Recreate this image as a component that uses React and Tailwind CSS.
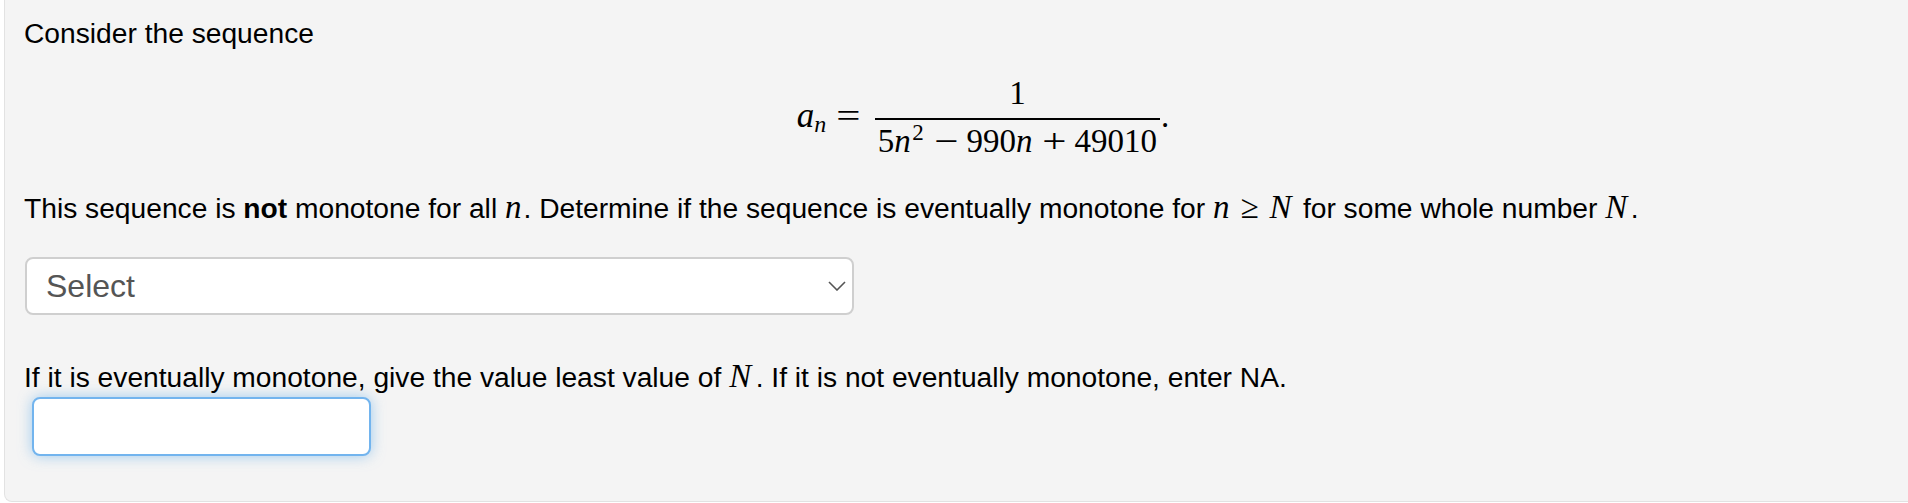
import React from "react";

const serif = "font-['Liberation_Serif','Times_New_Roman',serif]";

// inline math letter, padded to roughly match Computer Modern widths
function Mi({ children, pad = "mr-[3px]" }) {
  return (
    <span className={`${serif} italic text-[33px] leading-none ${pad}`}>
      {children}
    </span>
  );
}

function Op({ children }) {
  return (
    <span className="mx-[11px] inline-block scale-x-[1.3]">{children}</span>
  );
}

function Formula() {
  return (
    <div className={`${serif} mt-[24px] flex justify-center pl-[53px] text-[33px] leading-[33px]`}>
      <div className="mt-[22px] flex items-baseline">
        <span className="italic text-[35px]">a</span>
        <span className="italic text-[24px] relative top-[5px]">n</span>
        <span className="ml-[13px] inline-block scale-x-[1.3]">=</span>
      </div>
      <div className="ml-[17px] flex flex-col">
        <div className="text-center">1</div>
        <div className="mt-[8px] h-[1.5px] bg-black" />
        <div className="mt-[5px] px-[3px] flex items-baseline whitespace-nowrap">
          <span>5</span>
          <span className="italic mr-[1.5px]">n</span>
          <span className="text-[23px] leading-none relative top-[-12px] mr-[2px]">2</span>
          <Op>−</Op>
          <span>990</span>
          <span className="italic mr-[1.5px]">n</span>
          <Op>+</Op>
          <span>49010</span>
        </div>
      </div>
      <div className="mt-[23px] ml-[1px]">.</div>
    </div>
  );
}

export default function App() {
  return (
    <div className="min-h-screen bg-white text-black font-['Liberation_Sans',Arial,sans-serif]">
      <div className="ml-[4px] h-[502px] border-l border-b border-[#e2e2e2] rounded-bl-[8px] bg-[#f4f4f4] pl-[19px] pr-[19px] pt-[13px]">
        <p className="text-[28.2px] leading-[40px]">Consider the sequence</p>

        <Formula />

        <p className="mt-[29.5px] text-[28.2px] leading-[40px] whitespace-nowrap">
          This sequence is <b>not</b> monotone for all <Mi pad="mr-[2px]">n</Mi>.
          Determine if the sequence is eventually monotone for{" "}
          <Mi pad="">n</Mi>
          <span className={`${serif} text-[33px] mx-[11px]`}>≥</span>
          <Mi pad="mr-[3.5px]">N</Mi> for some whole number{" "}
          <Mi pad="mr-[3.5px]">N</Mi>.
        </p>

        <div className="mt-[29px] ml-[1px] w-[829px] h-[58px] flex items-center justify-between rounded-[8px] border-2 border-[#cfcfcf] bg-white pl-[19px] pr-[6px]">
          <span className="text-[32px] text-[#555555]">Select</span>
          <svg width="18" height="10" viewBox="0 0 18 10" fill="none">
            <path d="M1 1 L9 9 L17 1" stroke="#555555" strokeWidth="1.6" />
          </svg>
        </div>

        <p className="mt-[42px] text-[28.2px] leading-[40px] whitespace-nowrap">
          If it is eventually monotone, give the value least value of{" "}
          <Mi pad="mr-[4.5px]">N</Mi>. If it is not eventually monotone, enter NA.
        </p>

        <input
          type="text"
          className="block ml-[8px] w-[339px] h-[59px] rounded-[8px] border-2 border-[#72b4ee] bg-white shadow-[0_0_14px_rgba(102,175,233,0.6)] outline-none"
        />
      </div>
    </div>
  );
}
